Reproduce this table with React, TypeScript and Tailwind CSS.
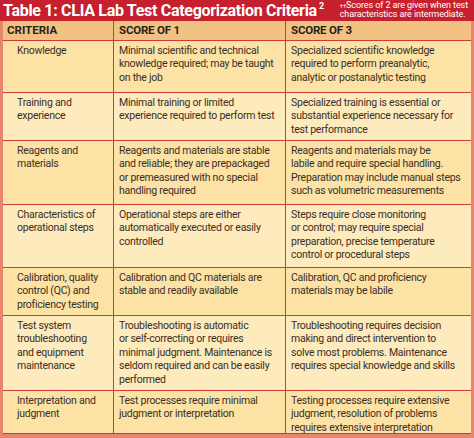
import React from "react";

const rows = [
  {
    criteria: ["Knowledge"],
    one: ["Minimal scientific and technical", "knowledge required; may be taught", "on the job"],
    three: ["Specialized scientific knowledge", "required to perform preanalytic,", "analytic or postanalytic testing"],
  },
  {
    criteria: ["Training and", "experience"],
    one: ["Minimal training or limited", "experience required to perform test"],
    three: ["Specialized training is essential or", "substantial experience necessary for", "test performance"],
  },
  {
    criteria: ["Reagents and", "materials"],
    one: [
      "Reagents and materials are stable",
      "and reliable; they are prepackaged",
      "or premeasured with no special",
      "handling required",
    ],
    three: [
      "Reagents and materials may be",
      "labile and require special handling.",
      "Preparation may include manual steps",
      "such as volumetric measurements",
    ],
  },
  {
    criteria: ["Characteristics of", "operational steps"],
    one: ["Operational steps are either", "automatically executed or easily", "controlled"],
    three: [
      "Steps require close monitoring",
      "or control; may require special",
      "preparation, precise temperature",
      "control or procedural steps",
    ],
  },
  {
    criteria: ["Calibration, quality", "control (QC) and", "proficiency testing"],
    one: ["Calibration and QC materials are", "stable and readily available"],
    three: ["Calibration, QC and proficiency", "materials may be labile"],
  },
  {
    criteria: ["Test system", "troubleshooting", "and equipment", "maintenance"],
    one: [
      "Troubleshooting is automatic",
      "or self-correcting or requires",
      "minimal judgment. Maintenance is",
      "seldom required and can be easily",
      "performed",
    ],
    three: [
      "Troubleshooting requires decision",
      "making and direct intervention to",
      "solve most problems. Maintenance",
      "requires special knowledge and skills",
    ],
  },
  {
    criteria: ["Interpretation and", "judgment"],
    one: ["Test processes require minimal", "judgment or interpretation"],
    three: ["Testing processes require extensive", "judgment, resolution of problems", "requires extensive interpretation"],
  },
];

function Lines({ lines }: { lines: string[] }) {
  return (
    <>
      {lines.map((l, i) => (
        <div key={i} className="whitespace-nowrap">
          {l}
        </div>
      ))}
    </>
  );
}

const cell = "pt-[3px] text-[10.5px] leading-[13.4px] tracking-[-0.25px]";
const head = "bg-[#f2c283] text-[11.5px] font-bold leading-[19px] text-[#2b1f17]";

export default function App() {
  return (
    <div className="w-[474px] h-[438px] overflow-hidden bg-[#e7866d] font-['Roboto','Liberation_Sans',sans-serif]">
      {/* Title bar */}
      <div className="h-[21px] bg-[#c61f2d] flex items-start justify-between pl-[3px] pr-[6px]">
        <h1 className="text-white font-bold text-[16px] leading-[21px] tracking-[-0.3px] whitespace-nowrap">
          Table 1: CLIA Lab Test Categorization Criteria
          <span className="inline-block align-top text-[9px] leading-none mt-[2px] ml-[2px]">2</span>
        </h1>
        <p className="text-white text-[9px] leading-[9px] pt-[1px] tracking-[-0.1px] whitespace-nowrap">
          <span className="text-[6px] align-top">††</span>Scores of 2 are given when test
          <br />
          characteristics are intermediate.
        </p>
      </div>

      {/* Table */}
      <div className="px-[3px]">
        <div className="grid grid-cols-[110px_171px_185px] grid-rows-[19px_51px_47px_63px_62px_47px_74px_42px] gap-px bg-[#cf3b36] pb-px text-[#3a2f25]">
          <div className={`${head} pl-[4px]`}>CRITERIA</div>
          <div className={`${head} pl-[5px] tracking-[-0.2px]`}>SCORE OF 1</div>
          <div className={`${head} pl-[5px] tracking-[-0.2px]`}>SCORE OF 3</div>
          {rows.map((r, i) => {
            const bg = i % 2 === 0 ? "bg-[#fce2a5]" : "bg-[#fdeabd]";
            return (
              <React.Fragment key={i}>
                <div className={`${bg} ${cell} pl-[14px]`}>
                  <Lines lines={r.criteria} />
                </div>
                <div className={`${bg} ${cell} pl-[5px]`}>
                  <Lines lines={r.one} />
                </div>
                <div className={`${bg} ${cell} pl-[5px]`}>
                  <Lines lines={r.three} />
                </div>
              </React.Fragment>
            );
          })}
        </div>
      </div>
    </div>
  );
}
